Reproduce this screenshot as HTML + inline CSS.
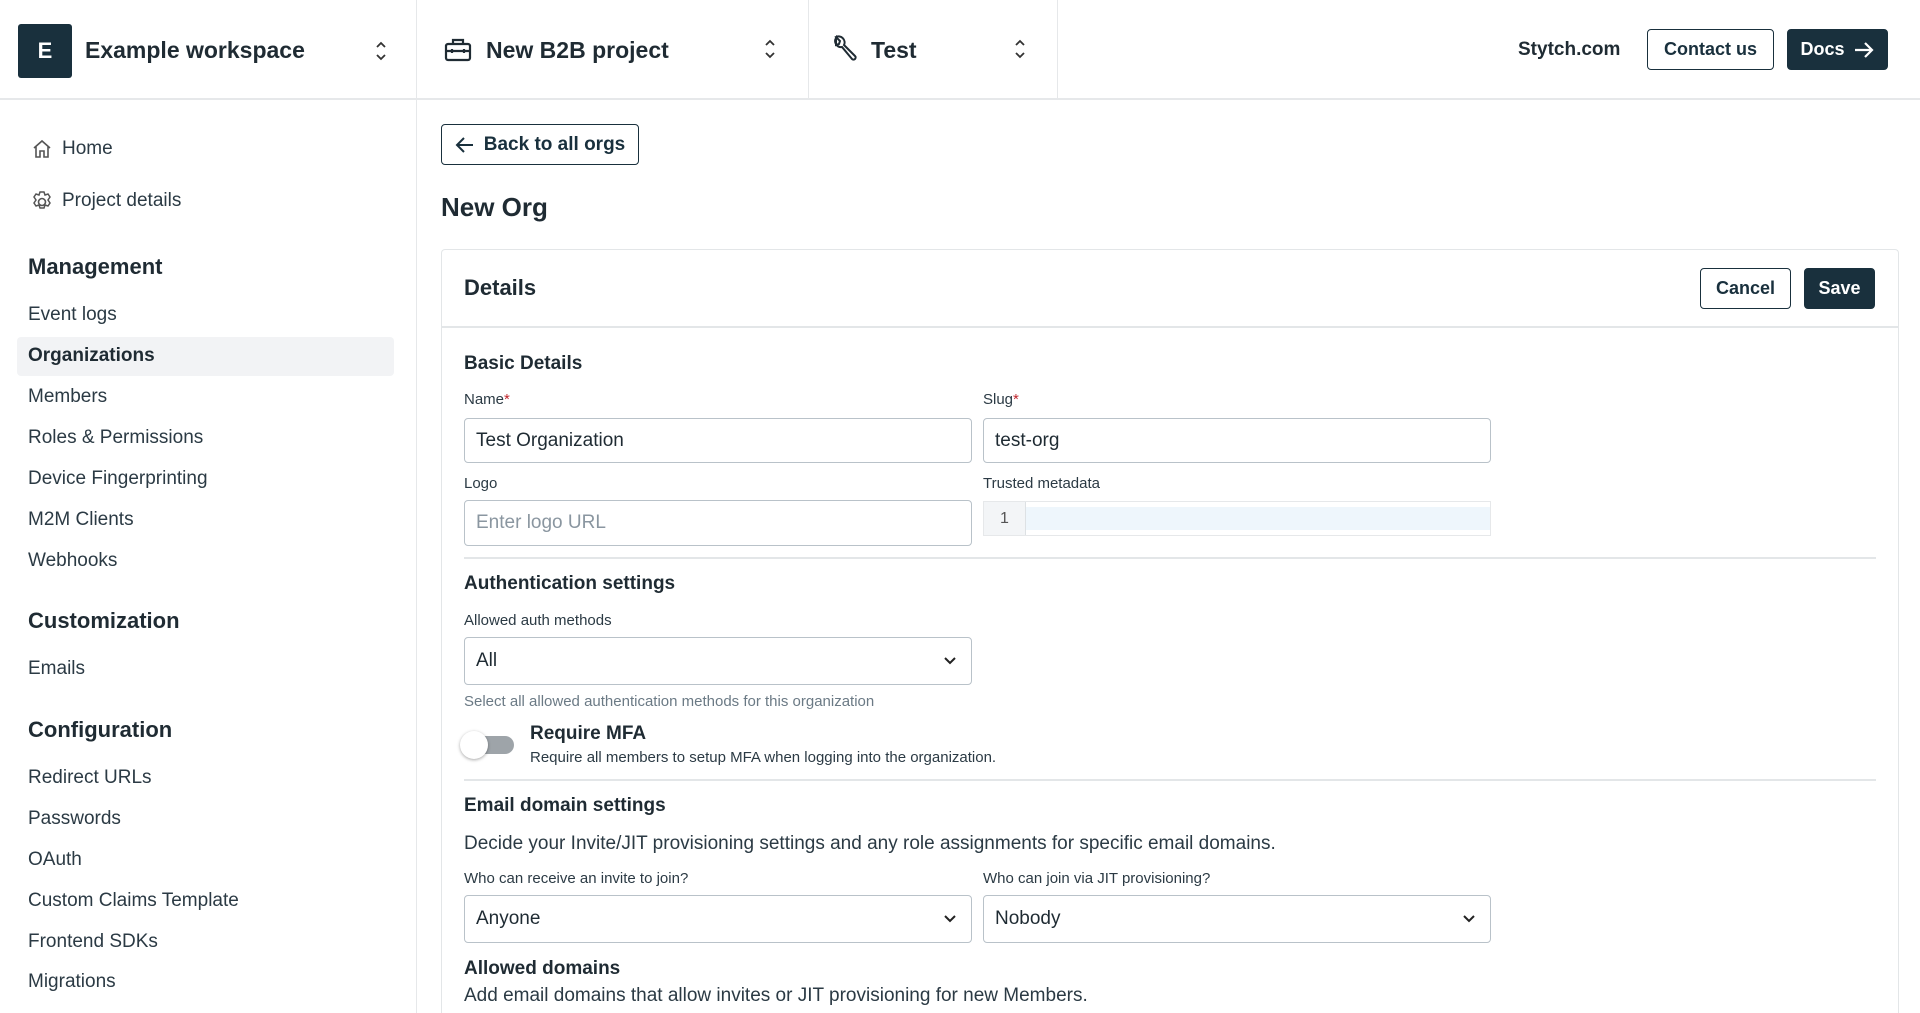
<!DOCTYPE html>
<html><head><meta charset="utf-8"><style>
*{box-sizing:border-box;margin:0;padding:0}
html,body{width:1920px;height:1013px;overflow:hidden}
body{background:#fff;font-family:"Liberation Sans",Arial,sans-serif;color:#1f2b33;position:relative}
.a{position:absolute;white-space:nowrap}
.hdr{position:absolute;left:0;top:0;width:1920px;height:100px;border-bottom:2px solid #e6e8ea}
.vl{position:absolute;top:0;width:1px;background:#e6e8ea}
.side{font-size:19px;color:#2b3a44}
.sec{font-size:22px;font-weight:bold;color:#1f2b33}
.btn{position:absolute;border:1.5px solid #19303d;border-radius:4px;font-weight:bold;font-size:18px;display:flex;align-items:center;justify-content:center;color:#19303d}
.dark{background:#19303d;color:#fff}
.inp{position:absolute;border:1.5px solid #b9c2c9;border-radius:4px;font-size:19px;padding-left:11px;display:flex;align-items:center;color:#1f2b33}
.lbl{font-size:15px;color:#2b3a44}
.h3{font-size:19px;font-weight:bold;color:#1f2b33}
.chev{position:absolute;right:14px;top:50%;margin-top:-5px}
</style></head><body>
<div class="hdr"></div>
<div class="vl" style="left:416px;height:1013px"></div>
<div class="vl" style="left:808px;height:100px"></div>
<div class="vl" style="left:1057px;height:100px"></div>
<div class="a" style="left:18px;top:24px;width:54px;height:54px;background:#19303d;border-radius:3px;color:#fff;font-size:22px;font-weight:bold;display:flex;align-items:center;justify-content:center">E</div>
<div class="a" style="left:85px;top:37px;font-size:23px;font-weight:bold">Example workspace</div>
<svg class="a" style="left:374px;top:39px" width="14" height="24" viewBox="0 0 14 24"><path d="M3 8l4-4 4 4M3 16l4 4 4-4" fill="none" stroke="#333" stroke-width="1.8"/></svg>
<svg class="a" style="left:444px;top:38px" width="28" height="24" viewBox="0 0 28 24"><rect x="2" y="6" width="24" height="16" rx="2" fill="none" stroke="#1f2b33" stroke-width="2.2"/><path d="M9 6V2h10v4M2 13h24M8 11v4M20 11v4" fill="none" stroke="#1f2b33" stroke-width="2.2"/></svg>
<div class="a" style="left:486px;top:37px;font-size:23px;font-weight:bold">New B2B project</div>
<svg class="a" style="left:763px;top:37px" width="14" height="24" viewBox="0 0 14 24"><path d="M3 8l4-4 4 4M3 16l4 4 4-4" fill="none" stroke="#333" stroke-width="1.8"/></svg>
<svg class="a" style="left:832px;top:35px" width="26" height="28" viewBox="0 0 26 28"><path d="M4 3a6 6 0 0 0 6 9l10 12a2 2 0 0 0 3-3L12 10a6 6 0 0 0-8-8l4 4-1 3-3 1z" fill="none" stroke="#1f2b33" stroke-width="2"/></svg>
<div class="a" style="left:871px;top:37px;font-size:23px;font-weight:bold">Test</div>
<svg class="a" style="left:1013px;top:37px" width="14" height="24" viewBox="0 0 14 24"><path d="M3 8l4-4 4 4M3 16l4 4 4-4" fill="none" stroke="#333" stroke-width="1.8"/></svg>
<div class="a" style="left:1518px;top:39px;font-size:19px;font-weight:bold">Stytch.com</div>
<div class="btn" style="left:1647px;top:29px;width:127px;height:41px">Contact us</div>
<div class="btn dark" style="left:1787px;top:29px;width:101px;height:41px">Docs <svg width="22" height="18" viewBox="0 0 22 18" style="margin-left:8px"><path d="M2 9h17M12 2l7 7-7 7" fill="none" stroke="#fff" stroke-width="2.2"/></svg></div>

<svg class="a" style="left:31px;top:138px" width="22" height="22" viewBox="0 0 22 22"><path d="M3 10L11 3l8 7M5 8v11h4v-6h4v6h4V8" fill="none" stroke="#555" stroke-width="1.6"/></svg>
<div class="a side" style="left:62px;top:138px">Home</div>
<svg class="a" style="left:30px;top:190px" width="24" height="24" viewBox="0 0 24 24"><circle cx="12" cy="12" r="3.5" fill="none" stroke="#555" stroke-width="1.6"/><path d="M10 2h4l1 3 3-1 2 3-2 3 2 3-2 3-3-1-1 3h-4l-1-3-3 1-2-3 2-3-2-3 2-3 3 1z" fill="none" stroke="#555" stroke-width="1.5"/></svg>
<div class="a side" style="left:62px;top:190px">Project details</div>
<div class="a sec" style="left:28px;top:254px">Management</div>
<div class="a side" style="left:28px;top:304px">Event logs</div>
<div class="a" style="left:17px;top:337px;width:377px;height:39px;background:#f2f3f5;border-radius:4px"></div>
<div class="a side" style="left:28px;top:345px;font-weight:bold;color:#1f2b33">Organizations</div>
<div class="a side" style="left:28px;top:386px">Members</div>
<div class="a side" style="left:28px;top:427px">Roles &amp; Permissions</div>
<div class="a side" style="left:28px;top:468px">Device Fingerprinting</div>
<div class="a side" style="left:28px;top:509px">M2M Clients</div>
<div class="a side" style="left:28px;top:550px">Webhooks</div>
<div class="a sec" style="left:28px;top:608px">Customization</div>
<div class="a side" style="left:28px;top:658px">Emails</div>
<div class="a sec" style="left:28px;top:717px">Configuration</div>
<div class="a side" style="left:28px;top:767px">Redirect URLs</div>
<div class="a side" style="left:28px;top:808px">Passwords</div>
<div class="a side" style="left:28px;top:849px">OAuth</div>
<div class="a side" style="left:28px;top:890px">Custom Claims Template</div>
<div class="a side" style="left:28px;top:931px">Frontend SDKs</div>
<div class="a side" style="left:28px;top:971px">Migrations</div>

<div class="btn" style="left:441px;top:124px;width:198px;height:41px;font-size:19px"><svg width="20" height="18" viewBox="0 0 20 18" style="margin-right:9px"><path d="M18 9H3M9 2L2 9l7 7" fill="none" stroke="#19303d" stroke-width="2"/></svg>Back to all orgs</div>
<div class="a" style="left:441px;top:192px;font-size:26px;font-weight:bold">New Org</div>

<div class="a" style="left:441px;top:249px;width:1458px;height:770px;border:1.5px solid #e3e6e8;border-bottom:none;border-radius:4px 4px 0 0"></div>
<div class="a" style="left:442px;top:326px;width:1456px;height:1.5px;background:#e3e6e8"></div>
<div class="a" style="left:464px;top:275px;font-size:22px;font-weight:bold">Details</div>
<div class="btn" style="left:1700px;top:268px;width:91px;height:41px">Cancel</div>
<div class="btn dark" style="left:1804px;top:268px;width:71px;height:41px">Save</div>

<div class="a h3" style="left:464px;top:353px">Basic Details</div>
<div class="a lbl" style="left:464px;top:391px">Name<span style="color:#c0262d">*</span></div>
<div class="a lbl" style="left:983px;top:391px">Slug<span style="color:#c0262d">*</span></div>
<div class="inp" style="left:464px;top:418px;width:508px;height:45px">Test Organization</div>
<div class="inp" style="left:983px;top:418px;width:508px;height:45px">test-org</div>
<div class="a lbl" style="left:464px;top:475px">Logo</div>
<div class="a lbl" style="left:983px;top:475px">Trusted metadata</div>
<div class="inp" style="left:464px;top:500px;width:508px;height:46px;color:#8a96a0">Enter logo URL</div>
<div class="a" style="left:983px;top:501px;width:508px;height:35px;border:1px solid #e6e8ea;background:#fff"></div>
<div class="a" style="left:984px;top:507px;width:506px;height:23px;background:#eef6fc"></div>
<div class="a" style="left:984px;top:502px;width:42px;height:33px;background:#f3f5f7;border-right:1px solid #dde1e4;font-size:16px;color:#555;text-align:center;line-height:33px">1</div>
<div class="a" style="left:464px;top:557px;width:1412px;height:1.5px;background:#e3e6e8"></div>

<div class="a h3" style="left:464px;top:573px">Authentication settings</div>
<div class="a lbl" style="left:464px;top:612px">Allowed auth methods</div>
<div class="inp" style="left:464px;top:637px;width:508px;height:48px">All<svg class="chev" width="14" height="10" viewBox="0 0 14 10"><path d="M2 2l5 5 5-5" fill="none" stroke="#222" stroke-width="2"/></svg></div>
<div class="a" style="left:464px;top:693px;font-size:15px;color:#6b7a85">Select all allowed authentication methods for this organization</div>
<div class="a" style="left:470px;top:736px;width:44px;height:18px;border-radius:9px;background:#9ea4a9"></div>
<div class="a" style="left:460px;top:731px;width:28px;height:28px;border-radius:50%;background:#fff;box-shadow:0 1px 3px rgba(0,0,0,.35)"></div>
<div class="a" style="left:530px;top:723px;font-size:19px;font-weight:bold">Require MFA</div>
<div class="a" style="left:530px;top:749px;font-size:15px;color:#2b3a44">Require all members to setup MFA when logging into the organization.</div>
<div class="a" style="left:464px;top:779px;width:1412px;height:1.5px;background:#e3e6e8"></div>

<div class="a h3" style="left:464px;top:795px">Email domain settings</div>
<div class="a" style="left:464px;top:833px;font-size:19px;color:#2b3a44">Decide your Invite/JIT provisioning settings and any role assignments for specific email domains.</div>
<div class="a lbl" style="left:464px;top:870px">Who can receive an invite to join?</div>
<div class="a lbl" style="left:983px;top:870px">Who can join via JIT provisioning?</div>
<div class="inp" style="left:464px;top:895px;width:508px;height:48px">Anyone<svg class="chev" width="14" height="10" viewBox="0 0 14 10"><path d="M2 2l5 5 5-5" fill="none" stroke="#222" stroke-width="2"/></svg></div>
<div class="inp" style="left:983px;top:895px;width:508px;height:48px">Nobody<svg class="chev" width="14" height="10" viewBox="0 0 14 10"><path d="M2 2l5 5 5-5" fill="none" stroke="#222" stroke-width="2"/></svg></div>
<div class="a h3" style="left:464px;top:958px">Allowed domains</div>
<div class="a" style="left:464px;top:985px;font-size:19px;color:#2b3a44">Add email domains that allow invites or JIT provisioning for new Members.</div>
</body></html>
